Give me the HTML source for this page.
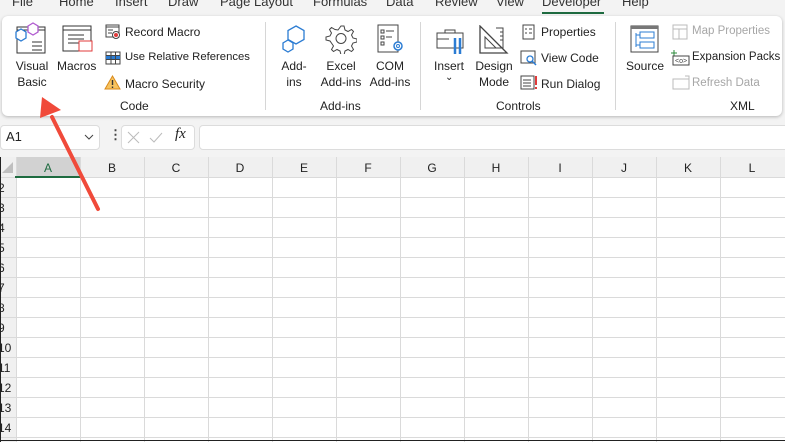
<!DOCTYPE html>
<html><head><meta charset="utf-8"><style>
*{margin:0;padding:0;box-sizing:border-box}
body{width:785px;height:442px;overflow:hidden;background:#f3f3f3;font-family:"Segoe UI","Liberation Sans",sans-serif;font-size:12px;color:#222;position:relative}
.a{position:absolute;white-space:nowrap}
.tabs span{position:absolute;top:-6px;font-size:13px;color:#333}
.ribbon{position:absolute;left:2px;top:16px;width:780px;height:100px;background:#fff;border-radius:6px;box-shadow:0 1px 3px rgba(0,0,0,.25)}
.sep{position:absolute;top:22px;width:1px;height:88px;background:#d6d6d6}
.lbl{font-size:12px;color:#222;text-align:center;line-height:16px}
.grey{color:#a6a6a6}
</style></head><body>
<div class="tabs">
<span style="left:12px">File</span><span style="left:59px">Home</span><span style="left:115px">Insert</span><span style="left:168px">Draw</span><span style="left:220px">Page Layout</span><span style="left:313px">Formulas</span><span style="left:386px">Data</span><span style="left:435px">Review</span><span style="left:496px">View</span><span style="left:542px">Developer</span><span style="left:622px">Help</span>
<div class="a" style="left:542px;top:12px;width:62px;height:2px;background:#1e6b40"></div>
</div>
<div class="ribbon"></div>
<svg class="a" style="left:14px;top:22px" width="34" height="32" viewBox="0 0 34 32"><rect x="3" y="5" width="28" height="26" fill="none" stroke="#333"/><path d="M3 8h28" stroke="#333"/><path d="M2 10l5-3 5 3v6l-5 3-5-3z" fill="#fff" stroke="#2b7cd3" stroke-width="1.3"/><path d="M14 4l5-3 5 3v6l-5 3-5-3z" fill="#fff" stroke="#b05bd0" stroke-width="1.3"/><path d="M18 20h10M18 24h10M18 28h10" stroke="#333"/></svg>
<div class="a lbl" style="left:12px;top:58px;width:40px">Visual<br>Basic</div>
<svg class="a" style="left:62px;top:25px" width="32" height="30" viewBox="0 0 32 30"><rect x="1" y="1" width="28" height="25" fill="none" stroke="#333"/><path d="M1 5h28M6 10h16M6 14h16M6 18h12" stroke="#333"/><path d="M17 16h13v10h-13z" fill="#fff" stroke="#e03b3b"/></svg>
<div class="a lbl" style="left:57px;top:58px">Macros</div>
<svg class="a" style="left:105px;top:24px" width="16" height="16"><rect x="1" y="1" width="13" height="12" fill="none" stroke="#444"/><path d="M1 3h13M3 6h5M3 9h4" stroke="#444"/><circle cx="11" cy="11" r="3.5" fill="#fff" stroke="#444"/><circle cx="11" cy="11" r="2" fill="#e03b3b"/></svg>
<div class="a" style="left:125px;top:25px">Record Macro</div>
<svg class="a" style="left:105px;top:51px" width="16" height="14"><rect x="1" y="1" width="14" height="12" fill="#fff" stroke="#444"/><rect x="1" y="4.5" width="14" height="4" fill="#2b7cd3"/><path d="M6 1v12M10.5 1v12M1 4.5h14M1 8.5h14" stroke="#444"/></svg>
<div class="a" style="left:125px;top:51px;font-size:11.3px">Use Relative References</div>
<svg class="a" style="left:104px;top:75px" width="17" height="15"><path d="M8.5 1L16 14H1z" fill="#f7c35f" stroke="#d98a1a"/><path d="M8.5 5v5M8.5 11.5v1.5" stroke="#333" stroke-width="1.4"/></svg>
<div class="a" style="left:125px;top:77px">Macro Security</div>
<div class="a lbl" style="left:120px;top:98px">Code</div>
<div class="sep" style="left:265px"></div>
<svg class="a" style="left:279px;top:24px" width="30" height="30"><path d="M17 2l8 4.5v9L17 20l-8-4.5v-9z" fill="#fff" stroke="#2b7cd3" stroke-width="1.3"/><path d="M9 16l5 3v6l-5 3-5-3v-6z" fill="#fff" stroke="#2b7cd3" stroke-width="1.3"/></svg>
<div class="a lbl" style="left:280px;top:58px;width:28px">Add-<br>ins</div>
<svg class="a" style="left:325px;top:24px" width="32" height="30" viewBox="0 0 32 30"><path d="M16 2l3 0 1 4 3 1.5 3.5-2 2 2-2 3.5 1.5 3 4 1v3l-4 1-1.5 3 2 3.5-2 2-3.5-2-3 1.5-1 4h-3l-1-4-3-1.5-3.5 2-2-2 2-3.5L5 17l-4-1v-3l4-1 1.5-3-2-3.5 2-2 3.5 2L13 6z" fill="none" stroke="#444"/><circle cx="16" cy="14.5" r="5" fill="none" stroke="#444"/></svg>
<div class="a lbl" style="left:318px;top:58px;width:46px">Excel<br>Add-ins</div>
<svg class="a" style="left:377px;top:24px" width="30" height="30"><rect x="1" y="1" width="20" height="27" fill="none" stroke="#444"/><path d="M4 6h3v3H4zM4 12h3v3H4zM4 18h3v3H4zM9 7h8M9 13h6" stroke="#444" fill="none"/><circle cx="21" cy="22" r="4" fill="#fff" stroke="#2b7cd3" stroke-width="1.5"/><circle cx="21" cy="22" r="1.5" fill="#fff" stroke="#2b7cd3"/></svg>
<div class="a lbl" style="left:367px;top:58px;width:46px">COM<br>Add-ins</div>
<div class="a lbl" style="left:320px;top:98px">Add-ins</div>
<div class="sep" style="left:420px"></div>
<svg class="a" style="left:435px;top:28px" width="32" height="28"><rect x="2" y="5" width="26" height="15" fill="none" stroke="#444"/><path d="M10 5V2h10v3M2 11h12" stroke="#444" fill="none"/><path d="M20 10v16M25 10v16" stroke="#2b7cd3" stroke-width="2.5"/></svg>
<div class="a lbl" style="left:434px;top:58px">Insert</div>
<div class="a" style="left:445px;top:72px;font-size:10px">⌄</div>
<svg class="a" style="left:479px;top:25px" width="30" height="30"><path d="M1 1v27h27z" fill="none" stroke="#444" stroke-width="1.3"/><path d="M6 12v11h11z" fill="none" stroke="#444"/><path d="M17 3h7v20h-7" fill="none" stroke="#444"/><path d="M21 7h3M21 11h3M21 15h3" stroke="#444"/></svg>
<div class="a lbl" style="left:475px;top:58px;width:38px">Design<br>Mode</div>
<svg class="a" style="left:522px;top:24px" width="14" height="16"><rect x="1" y="1" width="11" height="14" fill="none" stroke="#444"/><path d="M3 5h2M3 9h2M7 5h3M7 9h3" stroke="#444"/></svg>
<div class="a" style="left:541px;top:25px">Properties</div>
<svg class="a" style="left:520px;top:50px" width="18" height="16"><rect x="1" y="1" width="14" height="12" fill="none" stroke="#444"/><circle cx="10" cy="9" r="3" fill="none" stroke="#2b7cd3" stroke-width="1.3"/><path d="M12 11l4 4" stroke="#2b7cd3" stroke-width="1.5"/></svg>
<div class="a" style="left:541px;top:51px">View Code</div>
<svg class="a" style="left:520px;top:75px" width="18" height="16"><rect x="1" y="1" width="13" height="13" fill="none" stroke="#444"/><path d="M3 5h8M3 8h8M3 11h8" stroke="#444"/><path d="M16 1v9M16 12v2" stroke="#e03b3b" stroke-width="2"/></svg>
<div class="a" style="left:541px;top:77px">Run Dialog</div>
<div class="a lbl" style="left:496px;top:98px">Controls</div>
<div class="sep" style="left:615px"></div>
<svg class="a" style="left:630px;top:25px" width="30" height="30"><rect x="1" y="1" width="27" height="26" fill="none" stroke="#444"/><rect x="1" y="1" width="27" height="3" fill="#777"/><path d="M6 8v14M6 10h4M6 20h4" stroke="#2b7cd3" fill="none"/><rect x="10" y="7" width="14" height="6" fill="none" stroke="#2b7cd3"/><rect x="10" y="17" width="14" height="6" fill="none" stroke="#2b7cd3"/></svg>
<div class="a lbl" style="left:626px;top:58px">Source</div>
<svg class="a" style="left:672px;top:24px" width="18" height="16"><rect x="1" y="1" width="14" height="14" fill="none" stroke="#bbb"/><path d="M1 5h14M7 5v10" stroke="#bbb"/></svg>
<div class="a grey" style="left:692px;top:25px;font-size:11.5px">Map Properties</div>
<svg class="a" style="left:671px;top:49px" width="20" height="18"><path d="M3 1v6M0 4h6" stroke="#2a8a3a"/><rect x="2" y="7" width="16" height="9" fill="none" stroke="#444"/><text x="4" y="14" font-size="7" fill="#444" font-family="Liberation Sans">&lt;o&gt;</text></svg>
<div class="a" style="left:692px;top:51px;font-size:11.5px">Expansion Packs</div>
<svg class="a" style="left:671px;top:75px" width="20" height="16"><rect x="2" y="4" width="16" height="10" fill="none" stroke="#bbb"/><path d="M14 1h4v3" stroke="#bbb" fill="none"/></svg>
<div class="a grey" style="left:692px;top:77px;font-size:11.5px">Refresh Data</div>
<div class="a lbl" style="left:730px;top:98px">XML</div>
<div class="a" style="left:0;top:125px;width:100px;height:25px;background:#fff;border:1px solid #dcdcdc;border-radius:4px"></div>
<div class="a" style="left:6px;top:129px;font-size:13px">A1</div>
<svg class="a" style="left:84px;top:134px" width="10" height="7"><path d="M1 1l4 4 4-4" stroke="#444" fill="none"/></svg>
<div class="a" style="left:109px;top:127px;font-size:13px;color:#444;font-weight:bold">⋮</div>
<div class="a" style="left:121px;top:125px;width:74px;height:25px;background:#fff;border:1px solid #dcdcdc;border-radius:4px"></div>
<svg class="a" style="left:127px;top:131px" width="40" height="14"><path d="M1 1l11 11M12 1L1 12" stroke="#bbb"/><path d="M23 7l4 4 8-9" stroke="#bbb" fill="none"/></svg>
<div class="a" style="left:175px;top:126px;font-family:'Liberation Serif',serif;font-style:italic;font-size:15px">fx</div>
<div class="a" style="left:199px;top:125px;width:600px;height:25px;background:#fff;border:1px solid #dcdcdc;border-radius:4px"></div>
<svg class="a" style="left:0;top:157px" width="785" height="285">
<rect x="0" y="0" width="785" height="285" fill="#fff"/>
<rect x="0" y="0" width="785" height="20" fill="#f0f0f0"/>
<rect x="0" y="0" width="16" height="285" fill="#f0f0f0"/>
<rect x="16" y="0" width="64" height="20" fill="#d2d2d2"/>
<path d="M13 5v11H2z" fill="#bfbfbf"/>
<g stroke="#dadada">
<path d="M80.5 0v285M144.5 0v285M208.5 0v285M272.5 0v285M336.5 0v285M400.5 0v285M464.5 0v285M528.5 0v285M592.5 0v285M656.5 0v285M720.5 0v285M16.5 0v285"/>
<path d="M0 20.5h785M0 40.5h785M0 60.5h785M0 80.5h785M0 100.5h785M0 120.5h785M0 140.5h785M0 160.5h785M0 180.5h785M0 200.5h785M0 220.5h785M0 240.5h785M0 260.5h785M0 280.5h785"/>
</g>
<rect x="15" y="19" width="65" height="2" fill="#1e6b40"/>
<g font-family="Liberation Sans,sans-serif" font-size="12" text-anchor="middle" fill="#222">
<text x="48" y="15" fill="#1e6b40">A</text><text x="112" y="15">B</text><text x="176" y="15">C</text><text x="240" y="15">D</text><text x="304" y="15">E</text><text x="368" y="15">F</text><text x="432" y="15">G</text><text x="496" y="15">H</text><text x="560" y="15">I</text><text x="624" y="15">J</text><text x="688" y="15">K</text><text x="752" y="15">L</text>
</g>
<g font-family="Liberation Sans,sans-serif" font-size="12" fill="#222">
<text x="-2" y="35">2</text><text x="-2" y="55">3</text><text x="-2" y="75">4</text><text x="-2" y="95">5</text><text x="-2" y="115">6</text><text x="-2" y="135">7</text><text x="-2" y="155">8</text><text x="-2" y="175">9</text><text x="-2" y="195">10</text><text x="-2" y="215">11</text><text x="-2" y="235">12</text><text x="-2" y="255">13</text><text x="-2" y="275">14</text>
</g>
<path d="M0.5 0v285M0 283.5h785" stroke="#222"/>
</svg>
<svg class="a" style="left:0;top:0" width="785" height="442">
<path d="M98 209L52 117" stroke="#f04a3a" stroke-width="4" stroke-linecap="round"/>
<path d="M42 97L40 118L61 110z" fill="#f04a3a"/>
</svg>
</body></html>
